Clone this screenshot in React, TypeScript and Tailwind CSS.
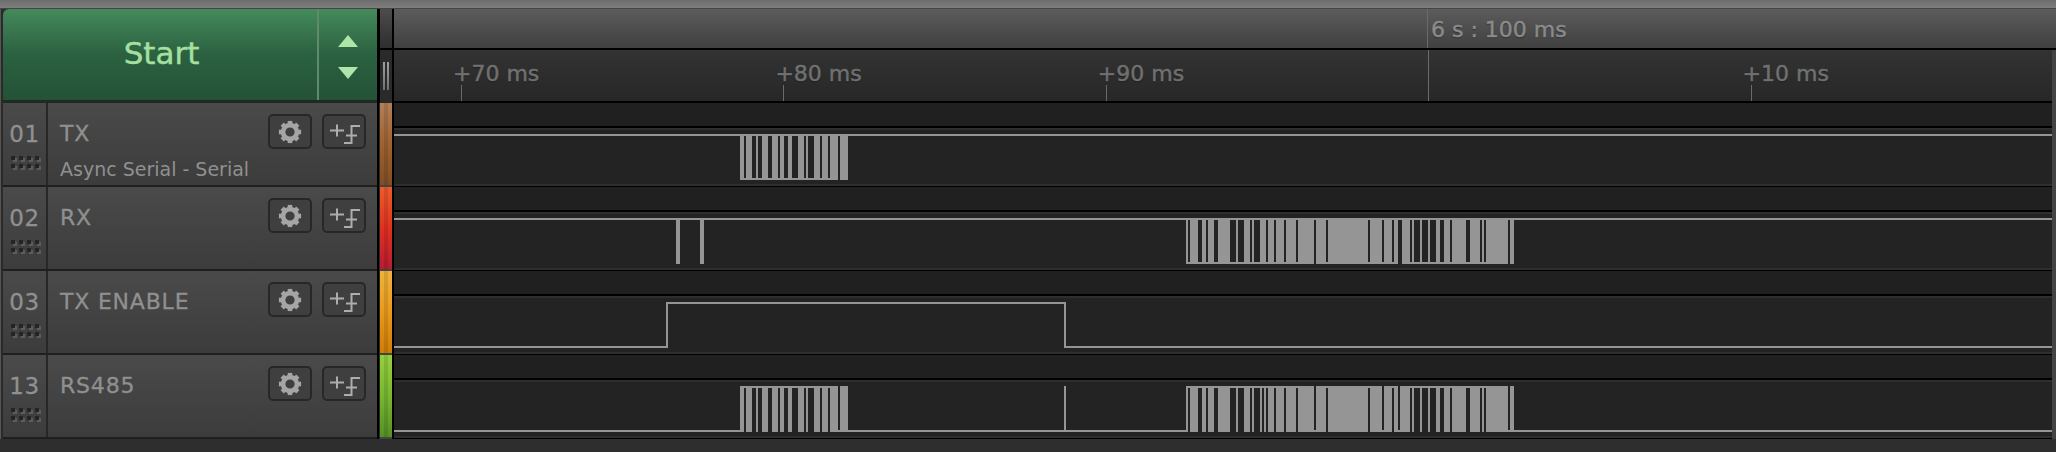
import React from 'react';

const SANS = "font-['DejaVu_Sans','Noto_Sans',sans-serif]";
const WAVE_W = 1658; // x 394 - 2052
const X0 = 394;

type Span = [number, number];

// dark gaps of the RX burst, px in the 3x crop starting at x=1160
const rxGaps: Span[] = [
  [84, 90], [114, 126], [138, 144], [162, 174], [210, 228], [234, 252], [270, 276], [282, 300],
  [318, 324], [342, 348], [372, 378], [408, 414], [462, 468], [498, 504], [624, 630], [666, 672],
  [696, 702], [714, 726], [750, 756], [762, 780], [786, 804], [810, 828], [840, 852], [870, 876],
  [918, 930], [960, 966], [972, 978], [1044, 1050],
];
const rs485Gaps: Span[] = [
  [84, 90], [114, 126], [138, 144], [162, 174], [210, 228], [234, 252], [270, 276], [282, 300],
  [306, 312], [318, 324], [342, 348], [372, 378], [408, 414], [462, 468], [498, 504], [624, 630],
  [666, 672], [696, 702], [714, 720], [750, 756], [762, 780], [786, 804], [810, 828], [840, 852],
  [870, 876], [918, 930], [960, 966], [972, 978], [1044, 1050],
];
const txBars: Span[] = [
  [740, 744], [746, 752], [756, 758], [762, 768], [772, 778], [780, 784], [788, 792], [798, 804],
  [806, 808], [814, 820], [822, 828], [830, 838], [840, 848],
];

const R = ({ x1, x2, y1, y2 }: { x1: number; x2: number; y1: number; y2: number }) => (
  <rect x={x1 - X0} y={y1} width={x2 - x1} height={y2 - y1} fill="#959595" />
);

const HIGH = 4; // y of high line inside the wave area
const LOW = 48; // y of low line

// burst between a and b, with dark gaps cut out
const burst = (gaps: Span[]) => {
  const out: Span[] = [];
  let pos = 78;
  gaps.forEach(([a, b]) => {
    out.push([pos, a]);
    pos = b;
  });
  out.push([pos, 1062]);
  return out.map(([a, b]) => [1160 + a / 3, 1160 + b / 3] as Span);
};

const TxWave = () => (
  <>
    <R x1={X0} x2={2052} y1={HIGH} y2={HIGH + 2} />
    {txBars.map(([a, b]) => <R key={a} x1={a} x2={b} y1={HIGH} y2={LOW + 2} />)}
    <R x1={740} x2={838} y1={LOW} y2={LOW + 2} />
  </>
);

const rxLow: Span[] = [[1186, 1314], [1316, 1398], [1402, 1508], [1510, 1514]];

const RxWave = () => (
  <>
    <R x1={X0} x2={2052} y1={HIGH} y2={HIGH + 2} />
    <R x1={676} x2={680} y1={HIGH} y2={LOW + 2} />
    <R x1={700} x2={704} y1={HIGH} y2={LOW + 2} />
    {burst(rxGaps).map(([a, b]) => <R key={a} x1={a} x2={b} y1={HIGH} y2={LOW + 2} />)}
    {rxLow.map(([a, b]) => <R key={a} x1={a} x2={b} y1={LOW} y2={LOW + 2} />)}
  </>
);

const EnableWave = () => (
  <>
    <R x1={X0} x2={666} y1={LOW} y2={LOW + 2} />
    <R x1={666} x2={668} y1={HIGH} y2={LOW + 2} />
    <R x1={666} x2={1066} y1={HIGH} y2={HIGH + 2} />
    <R x1={1064} x2={1066} y1={HIGH} y2={LOW + 2} />
    <R x1={1064} x2={2052} y1={LOW} y2={LOW + 2} />
  </>
);

const rsLow: Span[] = [[X0, 740], [838, 1186], [1314, 1316], [1382, 1384], [1398, 1400], [1508, 1510], [1514, 2052]];
const rsHigh: Span[] = [[740, 838], [1186, 1314], [1316, 1382], [1384, 1398], [1400, 1508], [1510, 1514]];

const Rs485Wave = () => (
  <>
    {rsLow.map(([a, b]) => <R key={a} x1={a} x2={b} y1={LOW} y2={LOW + 2} />)}
    {rsHigh.map(([a, b]) => <R key={a} x1={a} x2={b} y1={HIGH} y2={HIGH + 2} />)}
    {txBars.map(([a, b]) => <R key={a} x1={a} x2={b} y1={HIGH} y2={LOW + 2} />)}
    <R x1={1064} x2={1066} y1={HIGH} y2={LOW + 2} />
    {burst(rs485Gaps).map(([a, b]) => <R key={a} x1={a} x2={b} y1={HIGH} y2={LOW + 2} />)}
  </>
);

const GearIcon = () => (
  <svg width="24" height="24" viewBox="0 0 26 26">
    <g fill="#a5a5a5">
      {[0, 45, 90, 135, 180, 225, 270, 315].map((r) => (
        <rect key={r} x="10.5" y="1" width="5" height="5" transform={`rotate(${r} 13 13)`} />
      ))}
    </g>
    <circle cx="13" cy="13" r="7.5" fill="none" stroke="#a5a5a5" strokeWidth="5" />
  </svg>
);

const TriggerIcon = () => (
  <svg width="38" height="28" viewBox="0 0 38 28" fill="none" stroke="#adadad" strokeWidth="2">
    <path d="M5 12.5h14M12 6.5v12" />
    <path d="M19 25h7.5V8H35M21 17.5h11" />
  </svg>
);

const IconButton = ({ children }: { children: React.ReactNode }) => (
  <div className="w-[44px] h-[35px] rounded-[5px] border-2 border-[#272727] bg-[#3f3f3f] flex items-center justify-center">
    {children}
  </div>
);

// little 2 rows of dots below the channel number
const Grip = () => (
  <div className="grid grid-cols-4 gap-[4px] w-[28px] mt-[8px]">
    {Array.from({ length: 8 }).map((_, i) => (
      <div key={i} className="w-[4px] h-[4px] bg-[#242424] [box-shadow:2px_2px_0_#5c5c5c]" />
    ))}
  </div>
);

interface Channel {
  num: string;
  name: string;
  sub?: string;
  strip: string;
  wave: React.ReactNode;
}

const channels: Channel[] = [
  { num: '01', name: 'TX', sub: 'Async Serial - Serial', strip: 'from-[#b17f58] via-[#a0622f] to-[#7f4e24]', wave: <TxWave /> },
  { num: '02', name: 'RX', strip: 'from-[#ee5a2a] via-[#e03020] to-[#b81c30]', wave: <RxWave /> },
  { num: '03', name: 'TX ENABLE', strip: 'from-[#efb33a] via-[#e89a1a] to-[#d07c08]', wave: <EnableWave /> },
  { num: '13', name: 'RS485', strip: 'from-[#95d03c] via-[#78b830] to-[#559025]', wave: <Rs485Wave /> },
];

const ChannelRow = ({ ch }: { ch: Channel }) => (
  <div className="flex h-[84px]">
    <div className="w-[374px] flex shrink-0 border-b-[2px] border-[#1f1f1f] bg-gradient-to-b from-[#4a4a4a] to-[#3c3c3c]">
      <div className="w-[45px] shrink-0 border-r-[2px] border-[#272727] flex flex-col items-center pt-[17px]">
        <div className={`${SANS} text-[23px] leading-[28px] tracking-[0.5px] text-[#909090] [-webkit-text-stroke:0.3px_#909090]`}>{ch.num}</div>
        <Grip />
      </div>
      <div className="flex-1 pl-[12px] relative">
        <div className={`${SANS} text-[22px] leading-[26px] mt-[18px] tracking-[0.8px] text-[#909090] [-webkit-text-stroke:0.3px_#909090]`}>{ch.name}</div>
        {ch.sub && <div className={`${SANS} text-[19px] leading-[22px] mt-[11px] text-[#909090]`}>{ch.sub}</div>}
        <div className="absolute top-[11px] right-[11px] flex gap-[10px]">
          <IconButton><GearIcon /></IconButton>
          <IconButton><TriggerIcon /></IconButton>
        </div>
      </div>
    </div>
    <div className="w-[2px] shrink-0 bg-black" />
    <div className="w-[1px] shrink-0 bg-[#2a2a2a]" />
    <div className={`w-[12px] shrink-0 flex justify-center bg-gradient-to-b ${ch.strip} border-b-[2px] border-[#444]`}>
      <div className="w-[4px] bg-black/10" />
    </div>
    <div className="w-[2px] shrink-0 bg-black" />
    <div className="flex-1 flex flex-col">
      <div className="h-[23px] bg-[#202020]" />
      <div className="h-[2px] bg-black" />
      <div className="h-[2px] bg-[#2e2e2e]" />
      <svg width={WAVE_W} height="54" className="block bg-[#232323] shrink-0">{ch.wave}</svg>
      <div className="h-[2px] bg-[#2e2e2e]" />
      <div className="h-[1px] bg-black" />
    </div>
  </div>
);

const Tick = ({ label }: { label: string }) => (
  <div className="w-[322.4px] relative h-full">
    <div className="absolute left-[0px] bottom-0 w-[1px] h-[16px] bg-[#6a6a6a]" />
    <div className={`absolute left-[-8px] top-[11px] ${SANS} text-[22px] leading-[26px] text-[#707070] [-webkit-text-stroke:0.5px_#707070] [text-shadow:0_1px_1px_#1c1c1c] whitespace-nowrap`}>
      {label}
    </div>
  </div>
);

export default function App() {
  return (
    <div className="w-[2056px] h-[452px] bg-[#2e2e2e] overflow-hidden">
      <div className="h-[9px] bg-gradient-to-b from-[#6e6e6e] to-[#7d7d7d] border-b border-[#444]" />
      <div className="flex">
        <div className="w-[3px] h-[430px] shrink-0 bg-[#555555] border-r-2 border-[#2a2a2a]" />
        <div className="w-[2049px]">
          {/* header */}
          <div className="flex h-[94px]">
            <div className="w-[374px] shrink-0 flex rounded-tl-[6px] overflow-hidden border-b-[3px] border-[#1f2a22]">
              <div className="flex-1 flex items-center justify-center pl-[3px] border-r-[2px] border-[#5f8a6c] bg-gradient-to-b from-[#458a5c] via-[#2b6140] to-[#245237]">
                <span className={`${SANS} text-[31px] leading-none text-[#a6e0a0] [-webkit-text-stroke:0.4px_#a6e0a0] mb-[3px]`}>Start</span>
              </div>
              <div className="w-[58px] shrink-0 flex flex-col items-center justify-center gap-[20px] pt-[5px] bg-gradient-to-b from-[#458a5c] via-[#2b6140] to-[#245237]">
                <div className="w-0 h-0 border-x-[10px] border-x-transparent border-b-[12px] border-b-[#aee5a8]" />
                <div className="w-0 h-0 border-x-[10px] border-x-transparent border-t-[12px] border-t-[#aee5a8]" />
              </div>
            </div>
            <div className="w-[3px] shrink-0 bg-black" />
            <div className="w-[12px] shrink-0 flex flex-col">
              <div className="h-[39px] bg-gradient-to-b from-[#4c4c4c] to-[#2e2e2e]" />
              <div className="h-[2px] bg-black" />
              <div className="flex-1 bg-[#2a2a2a] flex justify-center gap-[2px] pt-[12px]">
                <div className="w-[2px] h-[28px] bg-gradient-to-b from-[#a0a0a0] to-[#707070]" />
                <div className="w-[2px] h-[28px] bg-gradient-to-b from-[#a0a0a0] to-[#707070]" />
              </div>
            </div>
            <div className="w-[2px] shrink-0 bg-black" />
            <div className="flex-1 flex flex-col">
              <div className="h-[41px] relative bg-gradient-to-b from-[#5c5c5c] to-[#404040] border-b-[2px] border-black">
                <div className="absolute left-[1033px] top-[0px] bottom-0 w-[1px] bg-[#6a6a6a]" />
                <div className={`absolute left-[1037px] top-[8px] ${SANS} text-[22px] leading-[26px] text-[#8a8a8a] [-webkit-text-stroke:0.5px_#8a8a8a] [text-shadow:0_1px_1px_#2a2a2a] whitespace-nowrap`}>
                  6 s : 100 ms
                </div>
              </div>
              <div className="flex-1 flex pl-[67px] bg-gradient-to-b from-[#333333] to-[#272727] border-b-2 border-black">
                <Tick label="+70 ms" />
                <Tick label="+80 ms" />
                <Tick label="+90 ms" />
                <div className="w-[322.4px] relative h-full">
                  <div className="absolute left-[0px] top-0 bottom-0 w-[1px] bg-[#6a6a6a]" />
                </div>
                <Tick label="+10 ms" />
              </div>
            </div>
          </div>
          {/* channels */}
          {channels.map((ch) => <ChannelRow key={ch.num} ch={ch} />)}
        </div>
        <div className="w-[4px] h-[430px] shrink-0 bg-[#444444]" />
      </div>
    </div>
  );
}
